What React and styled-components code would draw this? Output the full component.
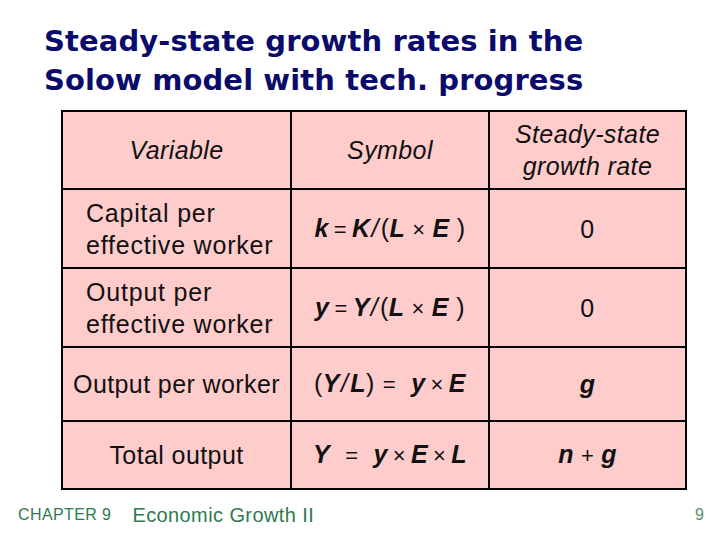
import React from 'react'
import styled, { createGlobalStyle } from 'styled-components'

const GlobalStyle = createGlobalStyle`
  html, body {
    margin: 0;
    padding: 0;
    background: #ffffff;
  }
  #root {
    width: 720px;
    height: 540px;
    overflow: hidden;
  }
`

const Slide = styled.div`
  width: 720px;
  height: 540px;
  display: flex;
  flex-direction: column;
  background: #ffffff;
`

const Title = styled.h1`
  margin: 0;
  padding: 22px 0 0 44px;
  font-family: 'DejaVu Sans', sans-serif;
  font-weight: bold;
  font-size: 29px;
  line-height: 39px;
  letter-spacing: 0.1px;
  color: #0b0b6b;
`

const Table = styled.div`
  margin: 10px 0 0 61px;
  width: 626px;
  box-sizing: border-box;
  display: grid;
  grid-template-columns: 227px 196px 195px;
  grid-template-rows: 76px 77px 77px 72px 66px;
  gap: 2px;
  padding: 2px;
  background: #000000;
`

const Cell = styled.div`
  background: #ffcccc;
  display: flex;
  flex-direction: column;
  justify-content: center;
  align-items: ${(p) => (p.$left ? 'flex-start' : 'center')};
  text-align: ${(p) => (p.$left ? 'left' : 'center')};
  padding-left: ${(p) => (p.$left ? '23px' : '0')};
  font-family: 'Liberation Sans', Arial, sans-serif;
  font-size: 25px;
  line-height: 32px;
  letter-spacing: ${(p) => (p.$left ? '0.8px' : '0.4px')};
  color: #111111;
  font-style: ${(p) => (p.$italic ? 'italic' : 'normal')};
  white-space: nowrap;
`

const Formula = styled.span`
  display: inline-flex;
  align-items: baseline;
`

const Var = styled.b`
  font-weight: bold;
  font-style: italic;
`

const Slash = styled.span`
  font-style: italic;
  margin: 0 2px 0 1px;
`

const Op = styled.span`
  font-size: 22px;
  margin: 0 ${(p) => p.$gap || 4}px;
`

const Footer = styled.div`
  margin-top: auto;
  height: 52px;
  display: flex;
  align-items: center;
  padding: 0 16px 0 18px;
  font-family: 'Liberation Sans', Arial, sans-serif;
  color: #2f7a4e;
`

const Chapter = styled.span`
  font-size: 16px;
  letter-spacing: 0.4px;
`

const Subject = styled.span`
  margin-left: 21px;
  font-size: 20px;
  letter-spacing: 0.4px;
`

const PageNo = styled.span`
  margin-left: auto;
  font-size: 16px;
  color: #5d8c6c;
`

export default function App() {
  return (
    <Slide>
      <GlobalStyle />
      <Title>
        Steady-state growth rates in the
        <br />
        Solow model with tech. progress
      </Title>
      <Table>
        <Cell $italic>Variable</Cell>
        <Cell $italic>Symbol</Cell>
        <Cell $italic>
          <span>Steady-state</span>
          <span>growth rate</span>
        </Cell>

        <Cell $left>
          <span>Capital per</span>
          <span>effective worker</span>
        </Cell>
        <Cell>
          <Formula>
            <Var>k</Var>
            <Op $gap={5}>=</Op>
            <Var>K</Var>
            <Slash>/</Slash>
            <span>(</span>
            <Var>L</Var>
            <Op $gap={7}>×</Op>
            <Var>E</Var>
            <span>&nbsp;)</span>
          </Formula>
        </Cell>
        <Cell>0</Cell>

        <Cell $left>
          <span>Output per</span>
          <span>effective worker</span>
        </Cell>
        <Cell>
          <Formula>
            <Var>y</Var>
            <Op $gap={5}>=</Op>
            <Var>Y</Var>
            <Slash>/</Slash>
            <span>(</span>
            <Var>L</Var>
            <Op $gap={7}>×</Op>
            <Var>E</Var>
            <span>&nbsp;)</span>
          </Formula>
        </Cell>
        <Cell>0</Cell>

        <Cell>Output per worker</Cell>
        <Cell>
          <Formula>
            <span>(</span>
            <Var>Y</Var>
            <Slash>/</Slash>
            <Var>L</Var>
            <span>)</span>
            <Op $gap={8}>=</Op>
            <Var>&nbsp;y</Var>
            <Op $gap={5}>×</Op>
            <Var>E</Var>
          </Formula>
        </Cell>
        <Cell>
          <Var>g</Var>
        </Cell>

        <Cell>Total output</Cell>
        <Cell>
          <Formula>
            <Var>Y</Var>
            <Op $gap={15}>=</Op>
            <Var>y</Var>
            <Op $gap={5}>×</Op>
            <Var>E</Var>
            <Op $gap={5}>×</Op>
            <Var>L</Var>
          </Formula>
        </Cell>
        <Cell>
          <Formula>
            <Var>n</Var>
            <Op $gap={7}>+</Op>
            <Var>g</Var>
          </Formula>
        </Cell>
      </Table>
      <Footer>
        <Chapter>CHAPTER 9</Chapter>
        <Subject>Economic Growth II</Subject>
        <PageNo>9</PageNo>
      </Footer>
    </Slide>
  )
}
